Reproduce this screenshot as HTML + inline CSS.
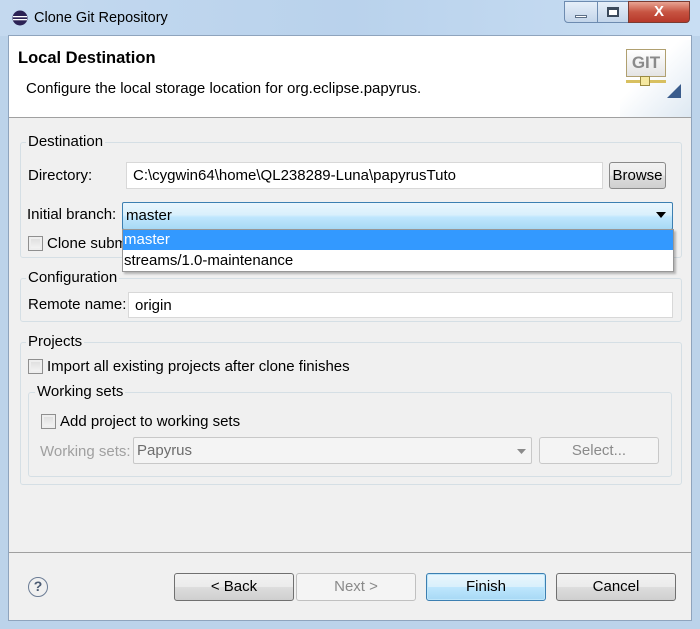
<!DOCTYPE html>
<html><head><style>
*{box-sizing:border-box;margin:0;padding:0}
body{width:700px;height:629px;overflow:hidden;font-family:"Liberation Sans",sans-serif;font-size:15px;color:#000;background:#bcd3ea;position:relative}
.a{position:absolute}
.t{position:absolute;white-space:nowrap;line-height:16px}
.grp{position:absolute;border:1px solid #d5dfe5;border-radius:3px}
.lbl{position:absolute;background:#f0f0f0;padding:0 2px;line-height:16px;white-space:nowrap}
.inp{position:absolute;background:#fff;border:1px solid #d8d8d8;line-height:25px;padding-left:6px;white-space:nowrap}
.cb{position:absolute;width:15px;height:15px;border:1px solid #8f8f8f;background:linear-gradient(#dcdcdc,#f6f6f6);box-shadow:inset 0 0 0 2px #eee}
.btn{position:absolute;border:1px solid #707070;border-radius:3px;background:linear-gradient(#f2f2f2 0,#ebebeb 50%,#dddddd 51%,#cfcfcf 100%);text-align:center;line-height:26px}
</style></head><body>
<div class="a" style="left:0;top:0;width:700px;height:36px;background:linear-gradient(90deg,#c4d9ef,#b9d2ec 50%,#c9def3)"></div>
<svg class="a" style="left:12px;top:10px" width="16" height="16"><circle cx="8" cy="8" r="7.5" fill="#2c2255"/><rect x="1" y="6" width="14" height="1.3" fill="#fff"/><rect x="1" y="9" width="14" height="1.3" fill="#fff"/></svg>
<div class="t" style="left:34px;top:10px;font-size:14.5px">Clone Git Repository</div>
<div class="a" style="left:564px;top:1px;width:34px;height:22px;border:1px solid #6d8bb0;border-radius:0 0 0 4px;background:linear-gradient(#e6eff9,#c3d5ea)"><div class="a" style="left:10px;top:13px;width:12px;height:3px;background:#fff;border:1px solid #5c6f87"></div></div>
<div class="a" style="left:597px;top:1px;width:32px;height:22px;border:1px solid #6d8bb0;background:linear-gradient(#e6eff9,#c3d5ea)"><div class="a" style="left:9px;top:5px;width:12px;height:10px;border:2px solid #3b4a5c;border-top-width:3px;background:#fff"></div></div>
<div class="a" style="left:628px;top:1px;width:62px;height:22px;border:1px solid #7a3b32;border-radius:0 0 4px 0;background:linear-gradient(#e8a493,#c75442 50%,#b7382a);color:#fff;font-weight:bold;text-align:center;line-height:20px;font-size:15px">X</div>
<div class="a" style="left:8px;top:35px;width:684px;height:586px;background:#f0f0f0;border:1px solid #8fa4bd"></div>
<div class="a" style="left:9px;top:36px;width:682px;height:82px;background:#fff;border-bottom:1px solid #a0a0a0"></div>
<div class="t" style="left:18px;top:50px;font-size:16.5px;font-weight:bold">Local Destination</div>
<div class="t" style="left:26px;top:81px">Configure the local storage location for org.eclipse.papyrus.</div>
<div class="a" style="left:620px;top:40px;width:71px;height:77px;background:linear-gradient(135deg,#fff 40%,#dde8f2)"></div>
<div class="a" style="left:626px;top:49px;width:40px;height:28px;border:1px solid #b0a070;background:linear-gradient(#fff,#e4e4e4);font-weight:bold;font-size:17px;color:#8a8a8a;text-align:center;line-height:26px">GIT</div>
<div class="a" style="left:626px;top:80px;width:40px;height:3px;background:#d8c060"></div>
<div class="a" style="left:640px;top:76px;width:10px;height:10px;border:1px solid #9a8a40;background:#f5e8a0"></div>
<svg class="a" style="left:667px;top:84px" width="14" height="14"><path d="M14 0L14 14L0 14Z" fill="#3a5c8c"/></svg>

<div class="grp" style="left:20px;top:142px;width:662px;height:116px"></div>
<div class="lbl" style="left:26px;top:134px">Destination</div>
<div class="t" style="left:28px;top:168px">Directory:</div>
<div class="inp" style="left:126px;top:162px;width:477px;height:27px">C:\cygwin64\home\QL238289-Luna\papyrusTuto</div>
<div class="btn" style="left:609px;top:162px;width:57px;height:27px;border-color:#8a8a8a">Browse</div>
<div class="t" style="left:27px;top:207px">Initial branch:</div>
<div class="a" style="left:122px;top:202px;width:551px;height:28px;border:1px solid #3c7fb1;border-radius:2px;background:linear-gradient(#eaf6fd,#d9f0fc 45%,#bee6fd 55%,#a7d9f5);line-height:26px;padding-left:3px">master</div>
<svg class="a" style="left:656px;top:212px" width="10" height="6"><path d="M0 0H10L5 6Z" fill="#000"/></svg>
<div class="cb" style="left:28px;top:236px"></div>
<div class="t" style="left:47px;top:236px">Clone subm</div>
<div class="a" style="left:122px;top:229px;width:552px;height:43px;background:#fff;border:1px solid #979797;box-shadow:2px 2px 2px rgba(0,0,0,.25)"></div>
<div class="a" style="left:123px;top:230px;width:550px;height:20px;background:#3399ff"></div>
<div class="t" style="left:124px;top:232px;color:#fff">master</div>
<div class="t" style="left:124px;top:253px">streams/1.0-maintenance</div>

<div class="grp" style="left:20px;top:278px;width:662px;height:44px"></div>
<div class="lbl" style="left:26px;top:270px">Configuration</div>
<div class="t" style="left:28px;top:297px">Remote name:</div>
<div class="inp" style="left:128px;top:292px;width:545px;height:26px">origin</div>

<div class="grp" style="left:20px;top:342px;width:662px;height:143px"></div>
<div class="lbl" style="left:26px;top:334px">Projects</div>
<div class="cb" style="left:28px;top:359px"></div>
<div class="t" style="left:47px;top:359px">Import all existing projects after clone finishes</div>
<div class="grp" style="left:28px;top:392px;width:644px;height:85px"></div>
<div class="lbl" style="left:35px;top:384px">Working sets</div>
<div class="cb" style="left:41px;top:414px"></div>
<div class="t" style="left:60px;top:414px">Add project to working sets</div>
<div class="t" style="left:40px;top:444px;color:#a0a0a0">Working sets:</div>
<div class="a" style="left:133px;top:437px;width:399px;height:27px;border:1px solid #c8c8c8;border-radius:2px;background:#f4f4f4;line-height:25px;padding-left:3px;color:#6d6d6d">Papyrus</div>
<svg class="a" style="left:517px;top:449px" width="9" height="5"><path d="M0 0H9L4.5 5Z" fill="#8a8a8a"/></svg>
<div class="a" style="left:539px;top:437px;width:120px;height:27px;border:1px solid #c8c8c8;border-radius:3px;background:#f4f4f4;text-align:center;line-height:25px;color:#8a8a8a">Select...</div>

<div class="a" style="left:9px;top:552px;width:682px;height:1px;background:#a0a0a0"></div>
<div class="a" style="left:28px;top:577px;width:20px;height:20px;border:1.5px solid #6b7c95;border-radius:50%;text-align:center;line-height:17px;font-weight:bold;color:#4a5a72;font-size:14px">?</div>
<div class="btn" style="left:174px;top:573px;width:120px;height:28px">&lt; Back</div>
<div class="btn" style="left:296px;top:573px;width:120px;height:28px;border-color:#c0c0c0;background:#f4f4f4;color:#8a8a8a">Next &gt;</div>
<div class="btn" style="left:426px;top:573px;width:120px;height:28px;border-color:#3c7fb1;background:linear-gradient(#eaf6fd 0,#d9f0fc 50%,#bee6fd 51%,#a7d9f5 100%);box-shadow:inset 0 0 0 1px #bfe6fa">Finish</div>
<div class="btn" style="left:556px;top:573px;width:120px;height:28px">Cancel</div>
</body></html>
